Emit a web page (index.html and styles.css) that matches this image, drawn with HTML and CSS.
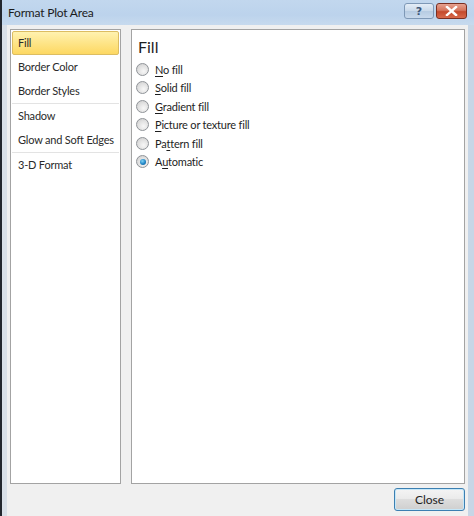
FILE: index.html
```html
<!DOCTYPE html>
<html>
<head>
<meta charset="utf-8">
<link rel="stylesheet" href="styles.css">
</head>
<body>
<div class="window">
  <div class="titlebar">
    <span class="title">Format Plot Area</span>
    <div class="caption-buttons">
      <div class="cap-btn help">?</div>
      <div class="cap-btn close">
        <svg width="13" height="10" viewBox="0 0 13 10"><path d="M2 1 L11 9 M11 1 L2 9" stroke="#fff" stroke-width="2.4" stroke-linecap="square"/></svg>
      </div>
    </div>
  </div>
  <div class="client">
    <div class="panels">
      <div class="nav">
        <div class="nav-item active">Fill</div>
        <div class="nav-item">Border Color</div>
        <div class="nav-item">Border Styles</div>
        <div class="nav-sep"></div>
        <div class="nav-item">Shadow</div>
        <div class="nav-item">Glow and Soft Edges</div>
        <div class="nav-sep"></div>
        <div class="nav-item">3-D Format</div>
      </div>
      <div class="content">
        <div class="heading">Fill</div>
        <div class="radio-list">
          <div class="radio-row"><span class="radio"></span><span class="label"><u>N</u>o fill</span></div>
          <div class="radio-row"><span class="radio"></span><span class="label"><u>S</u>olid fill</span></div>
          <div class="radio-row"><span class="radio"></span><span class="label"><u>G</u>radient fill</span></div>
          <div class="radio-row"><span class="radio"></span><span class="label"><u>P</u>icture or texture fill</span></div>
          <div class="radio-row"><span class="radio"></span><span class="label">Pa<u>t</u>tern fill</span></div>
          <div class="radio-row"><span class="radio checked"></span><span class="label">A<u>u</u>tomatic</span></div>
        </div>
      </div>
    </div>
    <div class="footer">
      <button class="btn">Close</button>
    </div>
  </div>
</div>
</body>
</html>
```

FILE: styles.css
```css
html, body {
  margin: 0;
  padding: 0;
}
body {
  font-family: Lato, "Noto Sans", sans-serif;
  font-size: 11px;
  letter-spacing: -0.2px;
  color: #1e1e1e;
  background: #f0f0f0;
}
.window {
  width: 474px;
  height: 516px;
  box-sizing: border-box;
  display: flex;
  flex-direction: column;
  border-left: 2px solid #23272e;
  background: linear-gradient(to right, #d9e0e8 0, #c7d6e6 100%);
  overflow: hidden;
}
.titlebar {
  height: 25px;
  flex: none;
  display: flex;
  align-items: flex-start;
  justify-content: space-between;
  background: linear-gradient(to bottom, #c2d7ee 0%, #bcd3ec 60%, #c7daee 100%);
  padding-left: 6px;
  padding-right: 7px;
}
.title {
  font-size: 12px;
  line-height: 12px;
  letter-spacing: -0.2px;
  margin-top: 7px;
  color: #1b1b1b;
}
.caption-buttons {
  display: flex;
  gap: 2px;
  margin-top: 3px;
}
.cap-btn {
  height: 16px;
  box-sizing: border-box;
  border-radius: 3px;
  display: flex;
  align-items: center;
  justify-content: center;
}
.help {
  width: 30px;
  background: linear-gradient(to bottom, #e4edf7 0%, #c9d9ea 50%, #b6cbe2 51%, #c8d9ec 100%);
  border: 1px solid #7e98b6;
  color: #3d5678;
  font-family: "DejaVu Sans", sans-serif;
  font-weight: bold;
  font-size: 11px;
  letter-spacing: 0;
}
.close {
  width: 31px;
  background: linear-gradient(to bottom, #e6a291 0%, #d5755d 45%, #c44a2c 55%, #d8694b 100%);
  border: 1px solid #7a2f22;
}
.client {
  flex: 1;
  display: flex;
  flex-direction: column;
  background: #f0f0f0;
  margin-left: 5px;
  margin-right: 6px;
  padding: 4px 3px 5px 3px;
}
.panels {
  flex: 1;
  display: flex;
  gap: 10px;
}
.nav {
  width: 111px;
  box-sizing: border-box;
  border: 1px solid #a3a3a3;
  background: #fff;
  padding: 1px 1px;
}
.nav-item {
  height: 24px;
  line-height: 24px;
  padding-left: 6px;
  box-sizing: border-box;
  white-space: nowrap;
  color: #2a2a2a;
}
.nav-item.active {
  background: linear-gradient(to bottom, #fff2b0 0%, #fee68c 45%, #fdd862 100%);
  border: 1px solid #dcbd62;
  border-radius: 2px;
  line-height: 22px;
  padding-left: 5px;
}
.nav-sep {
  height: 1px;
  background: #e3e3e3;
}
.content {
  flex: 1;
  box-sizing: border-box;
  border: 1px solid #a3a3a3;
  background: #fff;
  padding: 7px 0 0 4px;
}
.heading {
  font-size: 16px;
  line-height: 20px;
  letter-spacing: 0;
  color: #1e1e1e;
  margin-bottom: 3px;
  margin-left: 2px;
}
.radio-list {
  display: flex;
  flex-direction: column;
}
.radio-row {
  height: 18.5px;
  display: flex;
  align-items: center;
  gap: 6px;
}
.radio {
  width: 13px;
  height: 13px;
  flex: none;
  box-sizing: border-box;
  border-radius: 50%;
  border: 1px solid #8f9398;
  background: radial-gradient(circle at 60% 65%, #f7f7f7 0%, #e2e2e2 50%, #c9c9c9 100%);
  display: flex;
  align-items: center;
  justify-content: center;
}
.radio.checked::after {
  content: "";
  width: 6px;
  height: 6px;
  border-radius: 50%;
  background: radial-gradient(circle at 40% 35%, #7fd3f5 0%, #1f84c5 55%, #0b4f86 100%);
}
.label {
  color: #1e1e1e;
}
.label u {
  text-decoration-thickness: 1px;
  text-underline-offset: 2px;
}
.footer {
  flex: none;
  display: flex;
  justify-content: flex-end;
  padding-top: 4px;
}
.btn {
  width: 71px;
  height: 23px;
  box-sizing: border-box;
  border: 1px solid #3c7fb1;
  border-radius: 3px;
  background: linear-gradient(to bottom, #f4f4f4 0%, #ebebeb 45%, #dddddd 50%, #cfcfcf 100%);
  box-shadow: inset 0 0 0 1px #c5e7f9;
  font-family: Lato, "Noto Sans", sans-serif;
  font-size: 12px;
  color: #1e1e1e;
  padding: 0;
}
```
